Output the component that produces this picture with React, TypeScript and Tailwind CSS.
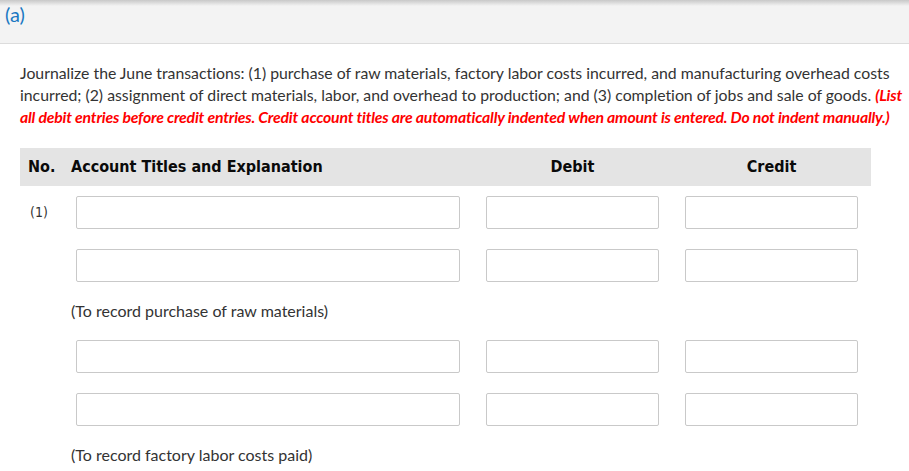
import React from "react";

const lato = { fontFamily: "Lato, 'Open Sans', sans-serif" };

function Inp({ w }: { w: string }) {
  return (
    <div className={`${w} h-[33px] rounded-[2px] border border-[#c9c9c9] bg-white shrink-0`} />
  );
}

function EntryRow({ no }: { no?: string }) {
  return (
    <div className="flex items-center h-[33px]">
      <div
        className="w-[56px] shrink-0 pl-[10px] text-[14px] text-[#333]"
        style={{ fontFamily: "'DejaVu Sans Condensed', 'DejaVu Sans', sans-serif" }}
      >
        {no}
      </div>
      <Inp w="w-[384px]" />
      <div className="w-[26px] shrink-0" />
      <Inp w="w-[173px]" />
      <div className="w-[26px] shrink-0" />
      <Inp w="w-[173px]" />
    </div>
  );
}

function Note({ children }: { children: React.ReactNode }) {
  return (
    <div className="pl-[51px] h-[20px] leading-[20px] text-[16px] text-[#333] my-[19px]" style={lato}>
      {children}
    </div>
  );
}

export default function App() {
  return (
    <div className="w-[909px] h-[471px] bg-white overflow-hidden [font-variant-ligatures:none]" style={lato}>
      <div className="h-[44px] bg-[#f3f3f3] border-b border-[#dcdcdc] relative">
        <div className="absolute inset-x-0 top-0 h-[6px] bg-gradient-to-b from-[#c8c8c8] to-[#f3f3f3]" />
        <div className="relative pl-[5px] pt-[1px] text-[20px] leading-[26px] text-[#1a78c2]">(a)</div>
      </div>
      <div className="pl-[20px]">
        <p className="mt-[18px] w-[889px] text-[15.8px] leading-[22px] text-[#333]">
          Journalize the June transactions: (1) purchase of raw materials, factory labor costs incurred, and manufacturing overhead costs incurred; (2) assignment of direct materials, labor, and overhead to production; and (3) completion of jobs and sale of goods.{" "}
          <span className="font-bold italic text-[#ff0000] tracking-[-0.2px]">
            (List all debit entries before credit entries. Credit account titles are automatically indented when amount is entered. Do not indent manually.)
          </span>
        </p>
        <div
          className="mt-[20px] w-[851px] h-[38px] bg-[#e4e4e4] flex items-center text-[16px] font-bold text-[#0a0a0a]"
          style={{ fontFamily: "'DejaVu Sans Condensed', 'DejaVu Sans', sans-serif" }}
        >
          <div className="w-[51px] pl-[8px] shrink-0">No.</div>
          <div className="w-[415px] shrink-0">Account Titles and Explanation</div>
          <div className="w-[173px] text-center shrink-0">Debit</div>
          <div className="w-[26px] shrink-0" />
          <div className="w-[173px] text-center shrink-0">Credit</div>
        </div>
        <div className="mt-[10px]">
          <EntryRow no="(1)" />
          <div className="h-[20px]" />
          <EntryRow />
          <Note>(To record purchase of raw materials)</Note>
          <EntryRow />
          <div className="h-[20px]" />
          <EntryRow />
          <Note>(To record factory labor costs paid)</Note>
        </div>
      </div>
    </div>
  );
}
